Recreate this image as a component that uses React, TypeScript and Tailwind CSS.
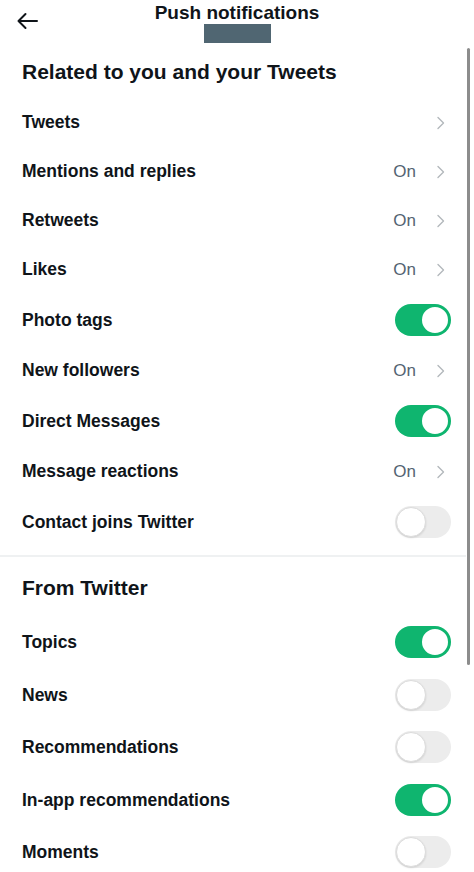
import React from "react";

type Row =
  | { label: string; kind: "link"; on?: boolean }
  | { label: string; kind: "toggle"; on: boolean };

const related: Row[] = [
  { label: "Tweets", kind: "link" },
  { label: "Mentions and replies", kind: "link", on: true },
  { label: "Retweets", kind: "link", on: true },
  { label: "Likes", kind: "link", on: true },
  { label: "Photo tags", kind: "toggle", on: true },
  { label: "New followers", kind: "link", on: true },
  { label: "Direct Messages", kind: "toggle", on: true },
  { label: "Message reactions", kind: "link", on: true },
  { label: "Contact joins Twitter", kind: "toggle", on: false },
];

const fromTwitter: Row[] = [
  { label: "Topics", kind: "toggle", on: true },
  { label: "News", kind: "toggle", on: false },
  { label: "Recommendations", kind: "toggle", on: false },
  { label: "In-app recommendations", kind: "toggle", on: true },
  { label: "Moments", kind: "toggle", on: false },
];

function Toggle({ on }: { on: boolean }) {
  return on ? (
    <div className="flex h-[32px] w-[56px] items-center justify-end rounded-full bg-[#0fb56f] p-[1px]">
      <div className="h-[30px] w-[30px] rounded-full border-2 border-[#0fb56f] bg-white" />
    </div>
  ) : (
    <div className="flex h-[32px] w-[56px] items-center justify-start rounded-full bg-[#ececec] p-[1px]">
      <div className="h-[30px] w-[30px] rounded-full border border-[#dcdcdc] bg-white shadow-[0_1px_2px_rgba(0,0,0,0.12)]" />
    </div>
  );
}

function Chevron() {
  return (
    <svg width="10" height="14" viewBox="0 0 10 14" fill="none">
      <path d="M2 1.5 L7.5 7 L2 12.5" stroke="#b3b8bc" strokeWidth="1.4" strokeLinecap="round" strokeLinejoin="round" />
    </svg>
  );
}

function RowItem({ row, h }: { row: Row; h: string }) {
  return (
    <div className={`flex ${h} items-center justify-between pl-[22px] pr-[23px]`}>
      <span className="text-[17.5px] font-bold text-[#0f1419]">{row.label}</span>
      {row.kind === "toggle" ? (
        <Toggle on={row.on} />
      ) : (
        <div className="flex items-center">
          {row.on && <span className="text-[17px] text-[#536471]">On</span>}
          <div className="ml-[20px] mr-[5px] flex items-center">
            <Chevron />
          </div>
        </div>
      )}
    </div>
  );
}

export default function App() {
  return (
    <div
      className="relative h-[872px] w-[474px] overflow-hidden bg-white"
      style={{ fontFamily: '"Liberation Sans", Arial, sans-serif' }}
    >
      {/* header */}
      <div className="flex h-[44px] items-start">
        <div className="flex w-[60px] pl-[16px] pt-[12px]">
          <svg width="22" height="18" viewBox="0 0 22 18" fill="none">
            <path d="M21 9 H2.5 M9.5 2 L2.5 9 L9.5 16" stroke="#0f1419" strokeWidth="2" strokeLinecap="round" strokeLinejoin="round" />
          </svg>
        </div>
        <div className="flex flex-1 flex-col items-center pt-[2px]">
          <div className="text-[19px] font-bold leading-[22px] text-[#0f1419]">Push notifications</div>
          <div className="h-[19px] w-[67px] bg-[#506672]" />
        </div>
        <div className="w-[60px]" />
      </div>

      {/* section 1 */}
      <div className="pl-[22px] pt-[14px] pb-[12px]">
        <div className="text-[21px] font-bold leading-[28px] text-[#0f1419]">Related to you and your Tweets</div>
      </div>
      <div className="flex flex-col">
        {related.map((r) => (
          <RowItem key={r.label} row={r} h={r.kind === "toggle" ? "h-[52px]" : "h-[49px]"} />
        ))}
      </div>

      <div className="mt-[7px] h-[2px] w-[466px] bg-[#eff1f2]" />

      {/* section 2 */}
      <div className="pl-[22px] pt-[17px] pb-[14px]">
        <div className="text-[21px] font-bold leading-[28px] text-[#0f1419]">From Twitter</div>
      </div>
      <div className="flex flex-col">
        {fromTwitter.map((r) => (
          <RowItem key={r.label} row={r} h="h-[52.5px]" />
        ))}
      </div>

      {/* scrollbar overlay */}
      <div className="absolute left-[467px] top-[48px] h-[617px] w-[3px] rounded-full bg-[#8c8c8c]" />
    </div>
  );
}
